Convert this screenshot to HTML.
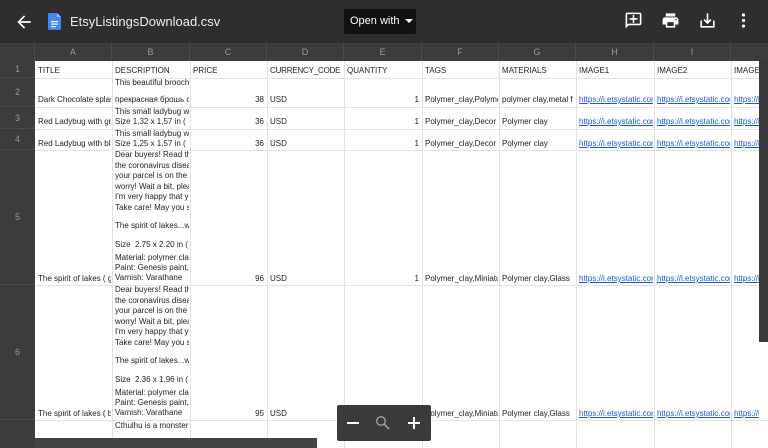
<!DOCTYPE html>
<html><head><meta charset="utf-8"><style>
*{margin:0;padding:0;box-sizing:border-box}
body{width:768px;height:448px;overflow:hidden;background:#fff;position:relative;font-family:"Liberation Sans","Noto Sans CJK SC",sans-serif;font-size:8px;color:#222}
.a{position:absolute;white-space:nowrap;overflow:hidden;line-height:10px;height:10px}
.m{position:absolute;white-space:nowrap;overflow:hidden;line-height:10.5px;left:115px;width:74px}
.vl{position:absolute;top:61px;width:1px;height:387px;background:#e2e2e2}
.hl{position:absolute;left:35px;width:733px;height:1px;background:#e2e2e2}
.ch{position:absolute;top:43px;height:18px;line-height:18px;text-align:center;color:#999;font-size:9px;border-right:1px solid #4a4a4a}
.rn{position:absolute;left:0;width:35px;text-align:center;color:#999;font-size:9px;border-bottom:1px solid #4a4a4a}
.lk{color:#1a55d8;text-decoration:underline}
.r{text-align:right}
</style></head><body>
<div style="position:absolute;left:0;top:0;width:768px;height:43px;background:#2e2e2e"></div>
<svg style="position:absolute;left:14px;top:12px" width="20" height="20" viewBox="0 0 24 24"><path d="M20 11H7.8l5.6-5.6L12 4l-8 8 8 8 1.4-1.4L7.8 13H20z" fill="#fff"/></svg>
<svg style="position:absolute;left:48px;top:13px" width="13" height="17" viewBox="0 0 13 17"><path d="M1.5 0H9l4 4v11.5a1.5 1.5 0 0 1-1.5 1.5h-10A1.5 1.5 0 0 1 0 15.5v-14A1.5 1.5 0 0 1 1.5 0z" fill="#4285f4"/><path d="M9 0v4h4z" fill="#a1c2fa"/><rect x="3" y="8" width="7" height="1.2" fill="#fff"/><rect x="3" y="10.5" width="7" height="1.2" fill="#fff"/><rect x="3" y="13" width="5" height="1.2" fill="#fff"/></svg>
<div class="a" style="left:70px;top:14px;height:16px;line-height:16px;font-size:13px;color:#eee">EtsyListingsDownload.csv</div>
<div style="position:absolute;left:344px;top:9px;width:72px;height:25px;background:#111;border-radius:2px;color:#fff;font-size:11px;line-height:25px;padding-left:6px">Open with <span style="display:inline-block;border-left:4px solid transparent;border-right:4px solid transparent;border-top:4px solid #fff;vertical-align:middle;margin-left:2px"></span></div>
<svg style="position:absolute;left:624px;top:11px" width="19" height="19" viewBox="0 0 24 24"><path d="M20 2H4c-1.1 0-2 .9-2 2v18l4-4h14c1.1 0 2-.9 2-2V4c0-1.1-.9-2-2-2zm0 14H5.2L4 17.2V4h16v12zM11 5h2v4h4v2h-4v4h-2v-4H7V9h4z" fill="#fff"/></svg>
<svg style="position:absolute;left:661px;top:11px" width="19" height="19" viewBox="0 0 24 24"><path d="M19 8H5c-1.66 0-3 1.34-3 3v6h4v4h12v-4h4v-6c0-1.660-1.34-3-3-3zm-3 11H8v-5h8v5zm3-7c-.55 0-1-.45-1-1s.45-1 1-1 1 .45 1 1-.45 1-1 1zm-1-9H6v4h12V3z" fill="#fff"/></svg>
<svg style="position:absolute;left:698px;top:11px" width="19" height="19" viewBox="0 0 24 24"><path d="M19 12v7H5v-7H3v9h18v-9zm-6 .67l2.59-2.58L17 11.5l-5 5-5-5 1.410-1.41L11 12.67V3h2z" fill="#fff"/></svg>
<svg style="position:absolute;left:734px;top:11px" width="19" height="19" viewBox="0 0 24 24"><circle cx="12" cy="5" r="2" fill="#fff"/><circle cx="12" cy="12" r="2" fill="#fff"/><circle cx="12" cy="19" r="2" fill="#fff"/></svg>

<div style="position:absolute;left:0;top:43px;width:768px;height:18px;background:#3c3c3c"></div>
<div style="position:absolute;left:0;top:61px;width:35px;height:387px;background:#3c3c3c"></div>
<div class="ch" style="left:0;width:35px"></div>
<div class="ch" style="left:35px;width:77px">A</div>
<div class="ch" style="left:112px;width:78px">B</div>
<div class="ch" style="left:190px;width:77px">C</div>
<div class="ch" style="left:267px;width:77px">D</div>
<div class="ch" style="left:344px;width:78px">E</div>
<div class="ch" style="left:422px;width:77px">F</div>
<div class="ch" style="left:499px;width:77px">G</div>
<div class="ch" style="left:576px;width:78px">H</div>
<div class="ch" style="left:654px;width:77px">I</div>
<div class="ch" style="left:731px;width:37px;border:0"></div>
<div class="rn" style="top:61px;height:17px;line-height:17px">1</div>
<div class="rn" style="top:78px;height:29px;line-height:29px">2</div>
<div class="rn" style="top:107px;height:22px;line-height:22px">3</div>
<div class="rn" style="top:129px;height:21px;line-height:21px">4</div>
<div class="rn" style="top:150px;height:135px;line-height:135px">5</div>
<div class="rn" style="top:285px;height:135px;line-height:135px">6</div>

<div class="vl" style="left:112px"></div><div class="vl" style="left:190px"></div><div class="vl" style="left:267px"></div><div class="vl" style="left:344px"></div><div class="vl" style="left:422px"></div><div class="vl" style="left:499px"></div><div class="vl" style="left:576px"></div><div class="vl" style="left:654px"></div><div class="vl" style="left:731px"></div>
<div class="hl" style="top:78px"></div><div class="hl" style="top:107px"></div><div class="hl" style="top:129px"></div><div class="hl" style="top:150px"></div><div class="hl" style="top:285px"></div><div class="hl" style="top:420px"></div>

<div class="a" style="left:38px;top:66px">TITLE</div>
<div class="a" style="left:115px;top:66px">DESCRIPTION</div>
<div class="a" style="left:193px;top:66px">PRICE</div>
<div class="a" style="left:270px;top:66px;letter-spacing:-0.2px;width:74px">CURRENCY_CODE</div>
<div class="a" style="left:347px;top:66px">QUANTITY</div>
<div class="a" style="left:425px;top:66px">TAGS</div>
<div class="a" style="left:502px;top:66px">MATERIALS</div>
<div class="a" style="left:579px;top:66px">IMAGE1</div>
<div class="a" style="left:657px;top:66px">IMAGE2</div>
<div class="a" style="left:734px;top:66px;width:25px">IMAGE3</div>

<div class="a" style="left:38px;top:95px;width:73px">Dark Chocolate splash</div>
<div class="a" style="left:115px;top:78px;width:74px">This beautiful brooch</div>
<div class="a" style="left:115px;top:95px;width:74px">прекрасная брошь с</div>
<div class="a r" style="left:190px;top:95px;width:74px">38</div>
<div class="a" style="left:270px;top:95px">USD</div>
<div class="a r" style="left:344px;top:95px;width:75px">1</div>
<div class="a" style="left:425px;top:95px;width:73px">Polymer_clay,Polymer</div>
<div class="a" style="left:502px;top:95px;width:73px">polymer clay,metal f</div>
<div class="a lk" style="left:579px;top:95px;width:74px">https://i.etsystatic.com</div>
<div class="a lk" style="left:657px;top:95px;width:73px">https://i.etsystatic.com</div>
<div class="a lk" style="left:734px;top:95px;width:25px">https://i</div>

<div class="a" style="left:38px;top:117px;width:73px">Red Ladybug with green</div>
<div class="a" style="left:115px;top:107px;width:74px">This small ladybug w</div>
<div class="a" style="left:115px;top:117px;width:74px">Size 1,32 x 1,57 in (</div>
<div class="a r" style="left:190px;top:117px;width:74px">36</div>
<div class="a" style="left:270px;top:117px">USD</div>
<div class="a r" style="left:344px;top:117px;width:75px">1</div>
<div class="a" style="left:425px;top:117px;width:73px">Polymer_clay,Decor</div>
<div class="a" style="left:502px;top:117px;width:73px">Polymer clay</div>
<div class="a lk" style="left:579px;top:117px;width:74px">https://i.etsystatic.com</div>
<div class="a lk" style="left:657px;top:117px;width:73px">https://i.etsystatic.com</div>
<div class="a lk" style="left:734px;top:117px;width:25px">https://i</div>

<div class="a" style="left:38px;top:139px;width:73px">Red Ladybug with black</div>
<div class="a" style="left:115px;top:129px;width:74px">This small ladybug w</div>
<div class="a" style="left:115px;top:139px;width:74px">Size 1,25 x 1,57 in (</div>
<div class="a r" style="left:190px;top:139px;width:74px">36</div>
<div class="a" style="left:270px;top:139px">USD</div>
<div class="a r" style="left:344px;top:139px;width:75px">1</div>
<div class="a" style="left:425px;top:139px;width:73px">Polymer_clay,Decor</div>
<div class="a" style="left:502px;top:139px;width:73px">Polymer clay</div>
<div class="a lk" style="left:579px;top:139px;width:74px">https://i.etsystatic.com</div>
<div class="a lk" style="left:657px;top:139px;width:73px">https://i.etsystatic.com</div>
<div class="a lk" style="left:734px;top:139px;width:25px">https://i</div>

<div class="m" style="top:150px">Dear buyers! Read th<br>the coronavirus disease<br>your parcel is on the<br>worry! Wait a bit, please<br>I'm very happy that you<br>Take care! May you stay</div>
<div class="m" style="top:221px">The spirit of lakes...w</div>
<div class="m" style="top:240px">Size&nbsp; 2.75 x 2.20 in (</div>
<div class="m" style="top:253px;line-height:10px">Material: polymer clay<br>Paint: Genesis paint,<br>Varnish: Varathane</div>
<div class="a" style="left:38px;top:274px;width:73px">The spirit of lakes ( g</div>
<div class="a r" style="left:190px;top:274px;width:74px">96</div>
<div class="a" style="left:270px;top:274px">USD</div>
<div class="a r" style="left:344px;top:274px;width:75px">1</div>
<div class="a" style="left:425px;top:274px;width:73px">Polymer_clay,Miniature</div>
<div class="a" style="left:502px;top:274px;width:73px">Polymer clay,Glass</div>
<div class="a lk" style="left:579px;top:274px;width:74px">https://i.etsystatic.com</div>
<div class="a lk" style="left:657px;top:274px;width:73px">https://i.etsystatic.com</div>
<div class="a lk" style="left:734px;top:274px;width:25px">https://i</div>

<div class="m" style="top:285px">Dear buyers! Read th<br>the coronavirus disease<br>your parcel is on the<br>worry! Wait a bit, please<br>I'm very happy that you<br>Take care! May you stay</div>
<div class="m" style="top:356px">The spirit of lakes...w</div>
<div class="m" style="top:375px">Size&nbsp; 2.36 x 1.96 in (</div>
<div class="m" style="top:388px;line-height:10px">Material: polymer clay<br>Paint: Genesis paint,<br>Varnish: Varathane</div>
<div class="a" style="left:38px;top:409px;width:73px">The spirit of lakes ( b</div>
<div class="a r" style="left:190px;top:409px;width:74px">95</div>
<div class="a" style="left:270px;top:409px">USD</div>
<div class="a r" style="left:344px;top:409px;width:75px">1</div>
<div class="a" style="left:425px;top:409px;width:73px">Polymer_clay,Miniature</div>
<div class="a" style="left:502px;top:409px;width:73px">Polymer clay,Glass</div>
<div class="a lk" style="left:579px;top:409px;width:74px">https://i.etsystatic.com</div>
<div class="a lk" style="left:657px;top:409px;width:73px">https://i.etsystatic.com</div>
<div class="a lk" style="left:734px;top:409px;width:25px">https://i</div>
<div class="a" style="left:115px;top:421px;width:74px">Cthulhu is a monster</div>

<div style="position:absolute;left:759px;top:61px;width:9px;height:281px;background:#3a3a3a"></div>
<div style="position:absolute;left:35px;top:438px;width:282px;height:10px;background:#444"></div>
<div style="position:absolute;left:337px;top:405px;width:94px;height:36px;background:#3a3a3a;border-radius:2px"></div>
<div style="position:absolute;left:347px;top:422px;width:12px;height:2px;background:#fff"></div>
<svg style="position:absolute;left:375px;top:415px" width="15" height="15" viewBox="0 0 15 15"><circle cx="6" cy="6" r="4.3" fill="none" stroke="#999" stroke-width="1.5"/><path d="M9 9l5 5" stroke="#999" stroke-width="1.8"/></svg>
<div style="position:absolute;left:408px;top:422px;width:12px;height:2px;background:#fff"></div>
<div style="position:absolute;left:413px;top:417px;width:2px;height:12px;background:#fff"></div>
</body></html>
